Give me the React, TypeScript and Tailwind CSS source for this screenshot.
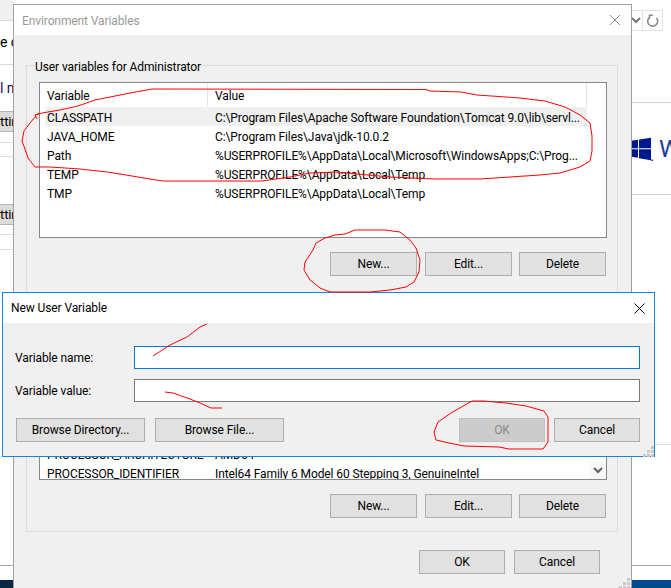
import type { ReactNode } from 'react';

const userVars = [
  ['CLASSPATH', 'C:\\Program Files\\Apache Software Foundation\\Tomcat 9.0\\lib\\servl...'],
  ['JAVA_HOME', 'C:\\Program Files\\Java\\jdk-10.0.2'],
  ['Path', '%USERPROFILE%\\AppData\\Local\\Microsoft\\WindowsApps;C:\\Prog...'],
  ['TEMP', '%USERPROFILE%\\AppData\\Local\\Temp'],
  ['TMP', '%USERPROFILE%\\AppData\\Local\\Temp'],
];

const systemVars = [
  ['PROCESSOR_ARCHITECTURE', 'AMD64'],
  ['PROCESSOR_IDENTIFIER', 'Intel64 Family 6 Model 60 Stepping 3, GenuineIntel'],
];

function Button({ children, className = '', disabled = false }: { children: ReactNode; className?: string; disabled?: boolean }) {
  return (
    <button
      disabled={disabled}
      className={`h-6 shrink-0 border flex items-center justify-center ${disabled ? 'bg-[#cccccc] border-[#bfbfbf] text-[#8a8a8a]' : 'bg-[#e1e1e1] border-[#adadad] text-black'} ${className}`}
    >
      {children}
    </button>
  );
}

function VarRow({ name, value, selected = false }: { name: string; value: string; selected?: boolean }) {
  return (
    <div className={`flex h-[19px] w-[542px] ml-[5px] pt-[2px] items-center whitespace-nowrap ${selected ? 'bg-[#f0f0f0]' : ''}`}>
      <div className="w-[170px] pl-[2px] shrink-0">{name}</div>
      <div>{value}</div>
    </div>
  );
}

function Grip({ className }: { className: string }) {
  return (
    <svg className={`absolute ${className}`} width="11" height="11" viewBox="0 0 11 11" fill="#c9c9c9">
      <rect x="8" y="0" width="3" height="3" />
      <rect x="4" y="4" width="3" height="3" />
      <rect x="8" y="4" width="3" height="3" />
      <rect x="0" y="8" width="3" height="3" />
      <rect x="4" y="8" width="3" height="3" />
      <rect x="8" y="8" width="3" height="3" />
    </svg>
  );
}

function LeftStrip() {
  return (
    <div className="w-[14px] h-[588px] overflow-hidden flex flex-col text-[14px] text-black">
      <div className="h-[21px] bg-[#f0f0f0] border-b border-[#d9d9d9]" />
      <div className="h-[44px] border-b border-[#d9d9d9] whitespace-nowrap flex items-center">e c</div>
      <div className="h-[46px] whitespace-nowrap flex items-center text-[#10105a]">l m</div>
      <div className="h-[21px] bg-[#dcdcdc] border-y border-[#b5b5b5] whitespace-nowrap flex items-center text-[13px]">ttin</div>
      <div className="h-[11px] border-b border-[#dddddd]" />
      <div className="h-[14px] border-b border-[#dddddd]" />
      <div className="h-[47px]" />
      <div className="h-[21px] bg-[#dcdcdc] border-y border-[#b5b5b5] whitespace-nowrap flex items-center text-[13px]">ttin</div>
      <div className="h-[10px] border-b border-[#dddddd]" />
      <div className="h-[15px] border-b border-[#dddddd]" />
      <div className="h-[316px] border-b border-[#aaaaaa]" />
      <div className="h-[14px]" />
      <div className="h-[8px] bg-[#0b2744]" />
    </div>
  );
}

function RightStrip() {
  return (
    <div className="w-[40px] h-[588px] overflow-hidden flex flex-col">
      <div className="h-[10px]" />
      <div className="h-[21px] flex border border-[#e3e3e3] w-[36px] ml-[-4px]">
        <div className="w-[15px] border-r border-[#e3e3e3] flex items-center justify-end pr-[1px]">
          <svg width="10" height="7" viewBox="0 0 10 7" fill="none" stroke="#777777" strokeWidth="2">
            <path d="M1 1l4 4 4-4" />
          </svg>
        </div>
        <div className="flex-1 flex items-center justify-center">
          <svg width="12" height="13" viewBox="0 0 12 13" fill="none" stroke="#8a8a8a" strokeWidth="1.6">
            <path d="M3 3a5 5 0 1 0 6.5 1M6 1.2h-3.5v3.5" />
          </svg>
        </div>
      </div>
      <div className="h-[72px] border-b border-[#d2d2d2]" />
      <div className="h-[92px] border-b border-[#d2d2d2] flex items-center">
        <svg className="-ml-[1px] shrink-0" width="23" height="24" viewBox="0 0 23 24" fill="#00188f">
          <path d="M0 4l8-1.2v8.4H0zM9 2.6l12-1.9v10.5H9zM0 12.2h8v8.5l-8-1.2zM9 12.2h12v11l-12-1.9z" />
          <rect x="21.5" y="22.5" width="1.5" height="1.5" />
        </svg>
        <span className="ml-[6px] text-[24px] leading-none text-[#1e3a9c] whitespace-nowrap">Wi</span>
      </div>
      <div className="h-[250px] border-b border-[#dddddd]" />
      <div className="h-[121px] border-b border-[#aaaaaa]" />
      <div className="h-[14px]" />
      <div className="h-[8px] bg-[#004a8f]" />
    </div>
  );
}

function EnvWindow() {
  return (
    <div className="absolute left-[13px] top-[4px] w-[619px] h-[590px] border border-[#a0a0a0] bg-[#f0f0f0] flex flex-col">
      <div className="h-[30px] shrink-0 bg-white flex items-center justify-between pl-[8px] pr-[10px] text-[#999999]">
        <span className="pt-[1px]">Environment Variables</span>
        <svg width="12" height="12" viewBox="0 0 12 12" stroke="#8a8a8a" strokeWidth="1">
          <path d="M1 1l10 10M11 1L1 11" />
        </svg>
      </div>

      <div className="relative ml-[12px] mt-[30px] w-[592px] h-[467px] shrink-0 border border-[#dcdcdc] pl-[12px] pt-[16px]">
        <div className="absolute left-[7px] -top-[8px] h-[17px] pt-[1px] leading-[16px] px-[1px] bg-[#f0f0f0] whitespace-nowrap">
          User variables for Administrator
        </div>

        <div className="w-[568px] h-[156px] border border-[#828790] bg-white overflow-hidden">
          <div className="flex h-[24px] w-[547px] items-center border-r border-[#e5e5e5]">
            <div className="w-[168px] h-full border-r border-[#e5e5e5] pl-[7px] pt-[2px] flex items-center shrink-0">Variable</div>
            <div className="pl-[7px] pt-[2px]">Value</div>
          </div>
          <div className="flex flex-col">
            {userVars.map(([name, value], i) => (
              <VarRow key={name} name={name} value={value} selected={i === 0} />
            ))}
          </div>
        </div>

        <div className="flex w-[567px] justify-end mt-[14px]">
          <Button className="w-[87px]">New...</Button>
          <Button className="w-[87px] ml-[8px]">Edit...</Button>
          <Button className="w-[87px] ml-[7px]">Delete</Button>
        </div>

        <div className="relative w-[568px] h-[180px] mt-[24px] border border-[#828790] bg-white overflow-hidden pt-[143px]">
          {systemVars.map(([name, value]) => (
            <VarRow key={name} name={name} value={value} />
          ))}
          <div className="absolute right-0 bottom-0 w-[17px] h-[17px] bg-[#f8f8f8] flex items-center justify-center">
            <svg width="10" height="7" viewBox="0 0 10 7" fill="none" stroke="#606060" strokeWidth="2">
              <path d="M1 1l4 4 4-4" />
            </svg>
          </div>
        </div>

        <div className="flex w-[567px] justify-end mt-[14px]">
          <Button className="w-[87px]">New...</Button>
          <Button className="w-[87px] ml-[8px]">Edit...</Button>
          <Button className="w-[87px] ml-[7px]">Delete</Button>
        </div>
      </div>

      <div className="flex justify-end mt-[18px] w-[586px]">
        <Button className="w-[86px]">OK</Button>
        <Button className="w-[86px] ml-[9px]">Cancel</Button>
      </div>
      <Grip className="left-[605px] top-[573px]" />
    </div>
  );
}

function NewVarDialog() {
  return (
    <div className="absolute left-[2px] top-[292px] w-[653px] h-[165px] border border-[#1883d7] bg-[#f0f0f0] flex flex-col">
      <div className="h-[30px] shrink-0 bg-white flex items-center justify-between pl-[8px] pr-[9px]">
        <span>New User Variable</span>
        <svg width="11" height="11" viewBox="0 0 11 11" stroke="#000000" strokeWidth="1">
          <path d="M0.5 0.5l10 10M10.5 0.5l-10 10" />
        </svg>
      </div>

      <div className="flex flex-col pl-[12px] pr-[14px] pt-[23px]">
        <label className="flex items-center h-[23px]">
          <span className="w-[119px] shrink-0">Variable name:</span>
          <input readOnly className="flex-1 h-full border border-[#0078d7] bg-white outline-none" />
        </label>
        <label className="flex items-center h-[23px] mt-[10px]">
          <span className="w-[119px] shrink-0">Variable value:</span>
          <input readOnly className="flex-1 h-full border border-[#7a7a7a] bg-white outline-none" />
        </label>
        <div className="flex mt-[16px] ml-[1px]">
          <Button className="w-[129px]">Browse Directory...</Button>
          <Button className="w-[129px] ml-[10px]">Browse File...</Button>
          <Button className="w-[86px] ml-auto" disabled>OK</Button>
          <Button className="w-[86px] ml-[9px]">Cancel</Button>
        </div>
      </div>
      <Grip className="left-[640px] top-[153px]" />
    </div>
  );
}

// red pen marks drawn over the screenshot
function Scribbles() {
  return (
    <svg className="absolute inset-0 pointer-events-none" width="671" height="588" viewBox="0 0 671 588" fill="none" stroke="#ff0000" strokeWidth="1">
      <path d="M35 115l7-2 18-3 18-4 17-6 15-3 20-4 22-4h8l266 0.5 4 1.5 31 1 16 3 43 3 25 3 20 6 15 8 10 8 2 13v15l-2 10-10 6-20 6-20 2-60 4h-45l-25-1-20-1-54-5-26 1-20 4-28 4h-99l-13-2-30-5-13-2-27-3-30-2h-15l-7-9-3-9-3-8 2-10 6-8 6-7" />
      <path d="M35 115l2 4M35 115l5 -2" />
      <path d="M316 243l-3 7-8 12-1 8 6 10 10 8 10 4h40l20-2 16-3 8-5 5-10 1-12-4-12-6-8-10-8-15-2h-30l-10 4-10 1-10 3-9 5" />
      <path d="M153 356l17-11 17-8 13-10 7-3" />
      <path d="M165 392l8 1 17 6 10 4 11 5h11" />
      <path d="M472 401h12l22 2 20 3 18 5 4 6v25l-5 7h-34l-10-2-35-1-15-3-13-3-2-8 4-10 13-9z" />
    </svg>
  );
}

export default function App() {
  return (
    <div className="relative w-[671px] h-[588px] overflow-hidden bg-white text-[12px] tracking-[-0.1px] text-black font-['Roboto',sans-serif] flex justify-between">
      <LeftStrip />
      <RightStrip />
      <EnvWindow />
      <NewVarDialog />
      <Scribbles />
    </div>
  );
}
